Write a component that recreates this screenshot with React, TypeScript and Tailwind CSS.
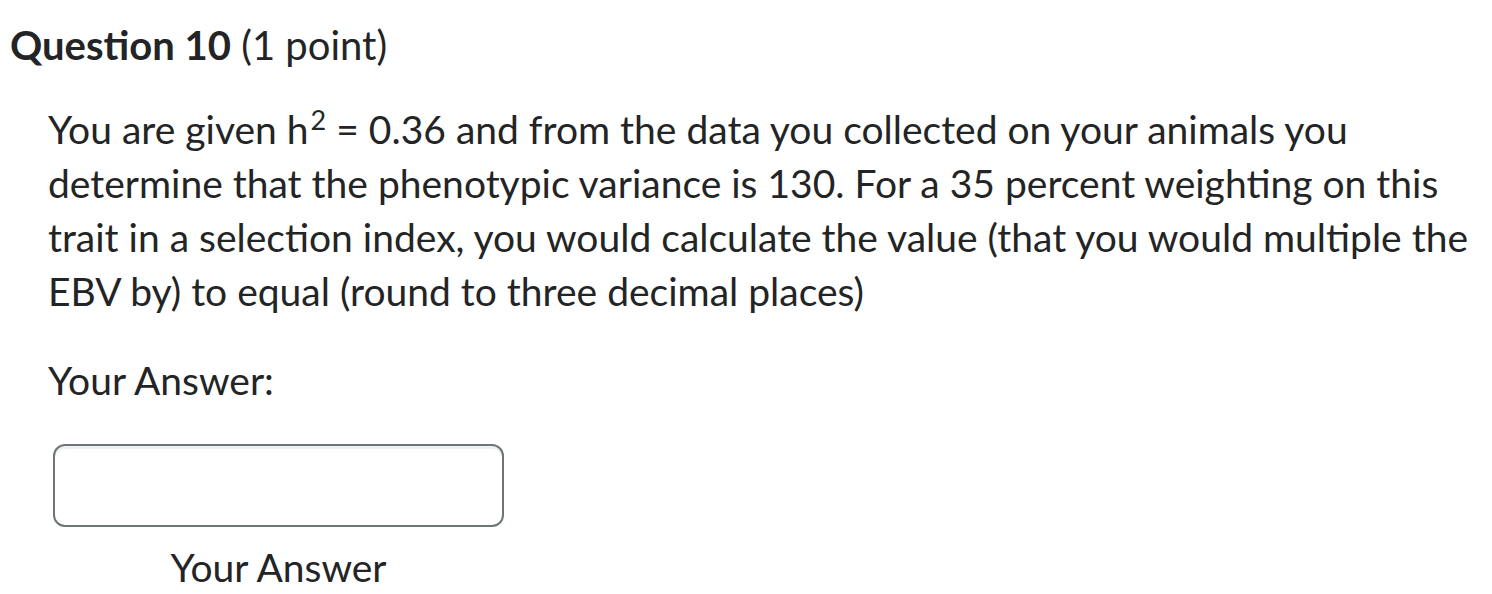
import React from 'react';

const App: React.FC = () => {
  return (
    <div className="w-[1492px] h-[594px] bg-white text-[#232425] overflow-hidden" style={{ fontFamily: 'Lato, "Noto Sans", sans-serif' }}>
      <h2 className="pl-[10px] pt-[21px] text-[40px] leading-[48px]">
        <span className="font-bold">Question 10</span> <span>(1 point)</span>
      </h2>
      <div className="pl-[48px] pt-[33px] pr-4">
        <p className="text-[39px] leading-[54px]">
          You are given h<sup className="text-[27px] -top-[14px] ml-[2px]">2</sup> = 0.36 and from the data you collected on your animals you determine that the phenotypic variance is 130. For a 35 percent weighting on this trait in a selection index, you would calculate the value (that you would multiple the EBV by) to equal (round to three decimal places)
        </p>
        <div className="mt-[35px] text-[39px] leading-[54px]">Your Answer:</div>
        <div className="mt-[37px] pl-[5px] w-[456px] flex flex-col items-center">
          <input
            type="text"
            aria-label="Your Answer"
            className="w-[451px] h-[83px] border-2 border-[#6d7576] rounded-[12px] bg-white shadow-[inset_0_3px_0_#eef0f1] outline-none px-3 text-[32px]"
          />
          <div className="mt-[15px] text-[39px] leading-[50px]">Your Answer</div>
        </div>
      </div>
    </div>
  );
};

export default App;
